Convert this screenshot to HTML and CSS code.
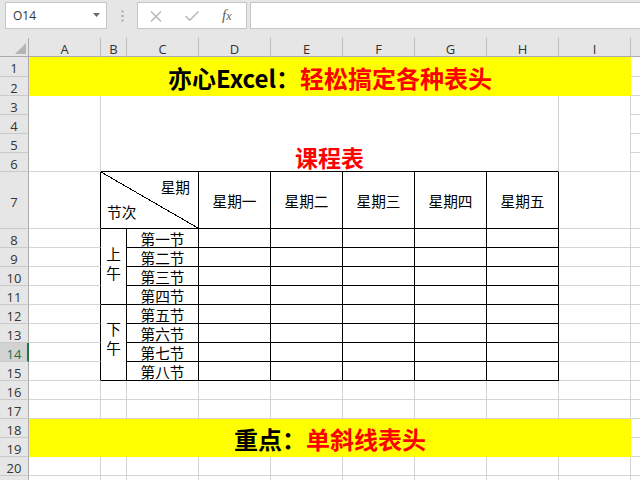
FILE: index.html
```html
<!DOCTYPE html>
<html lang="zh-CN">
<head>
<meta charset="utf-8">
<title>课程表</title>
<link rel="stylesheet" href="styles.css">
</head>
<body>
<div class="toolbar">
  <div class="namebox"><span>O14</span><svg class="dd" width="7" height="4" viewBox="0 0 7 4"><path d="M0 0H7L3.5 4Z" fill="#6a6a6a"/></svg></div>
  <svg class="dots" width="3" height="12" viewBox="0 0 3 12"><rect x="0.5" y="0.5" width="2" height="2" fill="#a6a6a6"/><rect x="0.5" y="5" width="2" height="2" fill="#a6a6a6"/><rect x="0.5" y="9.5" width="2" height="2" fill="#a6a6a6"/></svg>
  <div class="fbtns">
    <svg class="icon-x" width="12" height="11" viewBox="0 0 12 11"><path d="M1 0.5L11 10.5M11 0.5L1 10.5" stroke="#b3b3b3" stroke-width="1.3" fill="none"/></svg>
    <svg class="icon-ok" width="14" height="10" viewBox="0 0 14 10"><path d="M0.5 5L4.8 9.2L13.5 0.6" stroke="#b3b3b3" stroke-width="1.4" fill="none"/></svg>
    <span class="fx">f<span class="fxx">x</span></span>
  </div>
  <div class="finput"></div>
</div>

<div class="sheet">
  <div class="corner"><span class="tri"></span></div>
  <div class="ch">A</div><div class="ch">B</div><div class="ch">C</div><div class="ch">D</div><div class="ch">E</div><div class="ch">F</div><div class="ch">G</div><div class="ch">H</div><div class="ch">I</div><div class="ch j"></div>

  <div class="rh">1</div>
  <div class="banner">亦心Excel：<span class="red">轻松搞定各种表头</span></div>
  <div class="c j"></div>
  <div class="rh">2</div>
  <div class="c j"></div>

  <div class="rh">3</div>
  <div class="c span4"></div>
  <div class="c caption"><span>课程表</span></div>
  <div class="c span4"></div>
  <div class="c j"></div>
  <div class="rh">4</div><div class="c j"></div>
  <div class="rh">5</div><div class="c j"></div>
  <div class="rh">6</div><div class="c j"></div>

  <div class="rh">7</div>
  <div class="c edge"></div>
  <div class="c t diag">
    <svg class="slash" viewBox="0 0 97 56" preserveAspectRatio="none"><line x1="0" y1="0" x2="97" y2="56" stroke="#000" stroke-width="1" shape-rendering="crispEdges"/></svg>
    <span class="dtop">星期</span>
    <span class="dbot">节次</span>
  </div>
  <div class="c t">星期一</div><div class="c t">星期二</div><div class="c t">星期三</div><div class="c t">星期四</div><div class="c t">星期五</div>
  <div class="c"></div><div class="c j"></div>

  <div class="rh">8</div>
  <div class="c edge"></div>
  <div class="c t half"><span>上</span><span>午</span></div>
  <div class="c t">第一节</div><div class="c t"></div><div class="c t"></div><div class="c t"></div><div class="c t"></div><div class="c t"></div>
  <div class="c"></div><div class="c j"></div>

  <div class="rh">9</div>
  <div class="c edge"></div>
  <div class="c t">第二节</div><div class="c t"></div><div class="c t"></div><div class="c t"></div><div class="c t"></div><div class="c t"></div>
  <div class="c"></div><div class="c j"></div>

  <div class="rh">10</div>
  <div class="c edge"></div>
  <div class="c t">第三节</div><div class="c t"></div><div class="c t"></div><div class="c t"></div><div class="c t"></div><div class="c t"></div>
  <div class="c"></div><div class="c j"></div>

  <div class="rh">11</div>
  <div class="c edge"></div>
  <div class="c t">第四节</div><div class="c t"></div><div class="c t"></div><div class="c t"></div><div class="c t"></div><div class="c t"></div>
  <div class="c"></div><div class="c j"></div>

  <div class="rh">12</div>
  <div class="c edge"></div>
  <div class="c t half low"><span>下</span><span>午</span></div>
  <div class="c t">第五节</div><div class="c t"></div><div class="c t"></div><div class="c t"></div><div class="c t"></div><div class="c t"></div>
  <div class="c"></div><div class="c j"></div>

  <div class="rh">13</div>
  <div class="c edge"></div>
  <div class="c t">第六节</div><div class="c t"></div><div class="c t"></div><div class="c t"></div><div class="c t"></div><div class="c t"></div>
  <div class="c"></div><div class="c j"></div>

  <div class="rh sel">14</div>
  <div class="c edge"></div>
  <div class="c t">第七节</div><div class="c t"></div><div class="c t"></div><div class="c t"></div><div class="c t"></div><div class="c t"></div>
  <div class="c"></div><div class="c j"></div>

  <div class="rh">15</div>
  <div class="c edge"></div>
  <div class="c t">第八节</div><div class="c t"></div><div class="c t"></div><div class="c t"></div><div class="c t"></div><div class="c t"></div>
  <div class="c"></div><div class="c j"></div>

  <div class="rh">16</div>
  <div class="c"></div><div class="c"></div><div class="c"></div><div class="c"></div><div class="c"></div><div class="c"></div><div class="c"></div><div class="c"></div><div class="c"></div><div class="c j"></div>

  <div class="rh">17</div>
  <div class="c"></div><div class="c"></div><div class="c"></div><div class="c"></div><div class="c"></div><div class="c"></div><div class="c"></div><div class="c"></div><div class="c"></div><div class="c j"></div>

  <div class="rh">18</div>
  <div class="banner">重点：<span class="red">单斜线表头</span></div>
  <div class="c j"></div>
  <div class="rh">19</div>
  <div class="c j"></div>

  <div class="rh">20</div>
  <div class="c"></div><div class="c"></div><div class="c"></div><div class="c"></div><div class="c"></div><div class="c"></div><div class="c"></div><div class="c"></div><div class="c"></div><div class="c j"></div>

  <div class="rh"></div>
  <div class="c"></div><div class="c"></div><div class="c"></div><div class="c"></div><div class="c"></div><div class="c"></div><div class="c"></div><div class="c"></div><div class="c"></div><div class="c j"></div>
</div>
</body>
</html>
```

FILE: styles.css
```css
* { box-sizing: border-box; }

body {
  margin: 0;
  width: 640px;
  height: 480px;
  overflow: hidden;
  background: #ffffff;
  font-family: "Noto Sans CJK SC", "Noto Sans", sans-serif;
  color: #000;
}

/* ---------- formula bar ---------- */
.toolbar {
  height: 38px;
  background: #e6e6e6;
  display: flex;
  align-items: flex-start;
  padding-top: 2px;
}

.namebox {
  margin-left: 5px;
  width: 102px;
  height: 27px;
  background: #fff;
  border: 1px solid #c6c6c6;
  display: flex;
  align-items: center;
  justify-content: space-between;
  padding: 0 6px 0 7px;
  font: 12px "Open Sans", sans-serif;
  color: #333;
}

.dd { margin-top: -1px; }

.dots {
  margin-left: 14px;
  margin-top: 8px;
}

.fbtns {
  margin-left: 13px;
  width: 110px;
  height: 27px;
  background: #fff;
  border: 1px solid #c6c6c6;
  display: flex;
  align-items: center;
  padding-left: 12px;
}

.icon-x { margin-top: 2px; }
.icon-ok { margin-left: 23px; margin-top: 1px; }

.fx {
  margin-left: 23px;
  font: italic 15px "Liberation Serif", serif;
  color: #5e5e5e;
}

.fxx { font-size: 12px; }

.finput {
  margin-left: 3px;
  flex: 1;
  height: 27px;
  background: #fff;
  border: 1px solid #c6c6c6;
  border-right: none;
}

/* ---------- sheet grid ---------- */
.sheet {
  display: grid;
  grid-template-columns: 29px 72px 26px 72px repeat(6, 72px) 9px;
  grid-template-rows: 19px 20px repeat(5, 19px) 57px repeat(14, 19px);
}

.corner {
  background: #e6e6e6;
  border-right: 1px solid #ababab;
  border-bottom: 1px solid #ababab;
  display: flex;
  justify-content: flex-end;
  align-items: flex-end;
  padding: 0 2px 2px 0;
}

.tri {
  width: 0;
  height: 0;
  border-left: 11px solid transparent;
  border-bottom: 11px solid #b4b4b4;
}

.ch {
  background: #e6e6e6;
  border-right: 1px solid #bdbdbd;
  border-bottom: 1px solid #ababab;
  display: flex;
  justify-content: center;
  align-items: center;
  padding-top: 3px;
  font: 13px "Open Sans", sans-serif;
  color: #333;
}

.ch.j { border-right: none; }

.rh {
  grid-column: 1;
  background: #e6e6e6;
  border-right: 1px solid #ababab;
  border-bottom: 1px solid #c9c9c9;
  display: flex;
  justify-content: center;
  align-items: center;
  padding-top: 3px;
  font: 13px "Open Sans", sans-serif;
  color: #333;
}

.rh.sel {
  background: #d2d2d2;
  color: #217346;
  border-right: 2px solid #217346;
  padding-left: 1px;
}

.c {
  border-right: 1px solid #d4d4d4;
  border-bottom: 1px solid #d4d4d4;
}

.c.j { border-right: none; }

.banner {
  grid-column: span 9;
  grid-row: span 2;
  background: #ffff00;
  display: flex;
  align-items: center;
  justify-content: center;
  font-size: 24px;
  font-weight: 700;
  color: #000;
  padding-top: 1px;
}

.red { color: #ff0000; }

.span4 { grid-row: span 4; }

.caption {
  grid-column: span 7;
  grid-row: span 4;
  border-bottom-color: #000;
  display: flex;
  justify-content: center;
  align-items: flex-end;
  color: #ff0000;
  font-size: 23px;
  font-weight: 700;
  line-height: 27px;
}

.edge { border-right-color: #000; }

.t {
  border-right-color: #000;
  border-bottom-color: #000;
  display: flex;
  align-items: center;
  justify-content: center;
  font-size: 14.67px;
  line-height: 19px;
  padding-top: 1px;
}

.diag {
  grid-column: span 2;
  position: relative;
  flex-direction: column;
  justify-content: space-between;
  align-items: stretch;
  padding: 7px 8px 8px 6px;
  line-height: 16px;
}

.slash {
  position: absolute;
  left: 0;
  top: 0;
  width: 100%;
  height: 100%;
}

.dtop { align-self: flex-end; }
.dbot { align-self: flex-start; }

.half {
  grid-row: span 4;
  flex-direction: column;
  line-height: 19px;
  padding-bottom: 8px;
}

.half.low { padding-bottom: 10px; }
```
